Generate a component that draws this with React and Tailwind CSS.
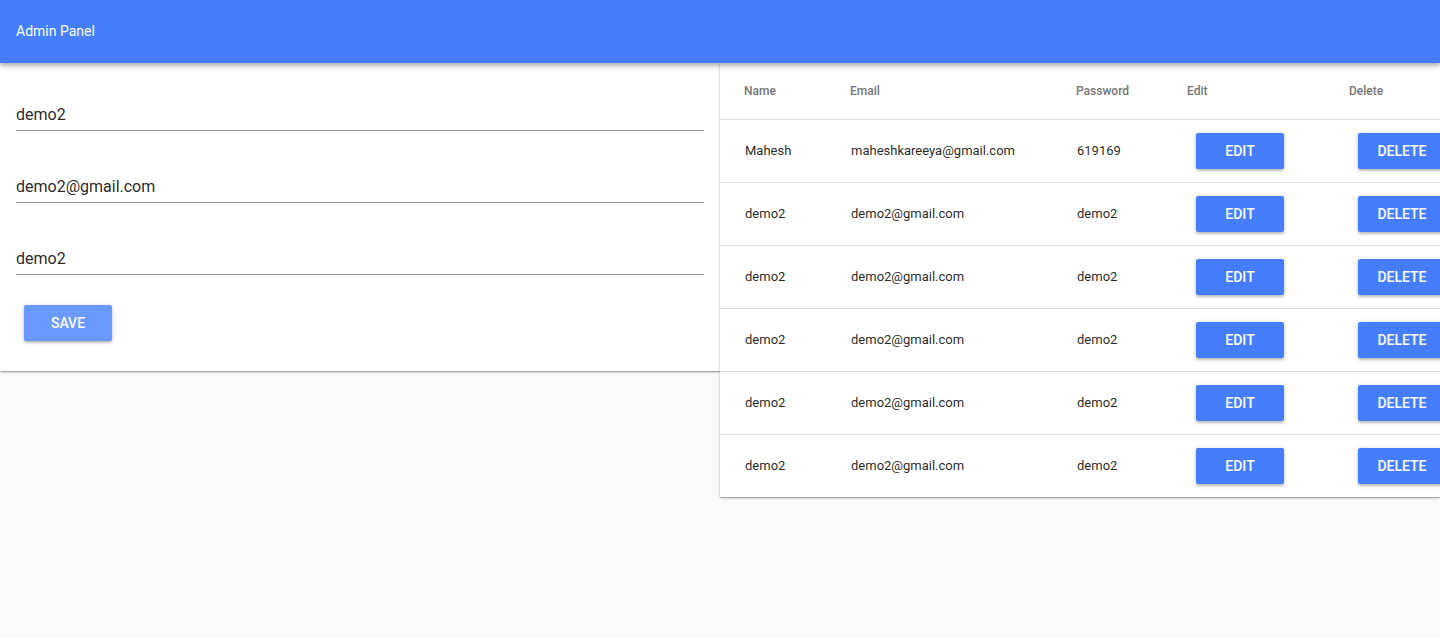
import React from 'react';

const users = [
    { name: 'Mahesh', email: 'maheshkareeya@gmail.com', password: '619169' },
    { name: 'demo2', email: 'demo2@gmail.com', password: 'demo2' },
    { name: 'demo2', email: 'demo2@gmail.com', password: 'demo2' },
    { name: 'demo2', email: 'demo2@gmail.com', password: 'demo2' },
    { name: 'demo2', email: 'demo2@gmail.com', password: 'demo2' },
    { name: 'demo2', email: 'demo2@gmail.com', password: 'demo2' },
];

const cols = "grid grid-cols-[106px_226px_111px_162px_180px]";

const Field = ({ value, first }) => (
    <div className={first ? 'pt-[25px]' : 'pt-[29px]'}>
        <div className="h-[43px] border-b border-[#949494] flex items-end pb-[6px]">
            <span className="text-[16px] text-[rgba(0,0,0,0.87)] leading-[19px]">{value}</span>
        </div>
    </div>
);

const Btn = ({ label }) => (
    <button className="h-9 min-w-[88px] px-4 ml-[9px] rounded-[2px] bg-[#447eff] text-white text-[14px] font-medium uppercase shadow-[0_1px_5px_rgba(0,0,0,0.2),0_2px_2px_rgba(0,0,0,0.14)]">
        {label}
    </button>
);

const App = () => {
    return (
        <div className="min-h-[638px] bg-[#fafafa] overflow-hidden" style={{ fontFamily: 'Roboto, "Liberation Sans", sans-serif' }}>
            {/* App bar */}
            <header className="relative z-10 h-[63px] bg-[#447eff] flex items-center px-4 shadow-[0_2px_4px_rgba(0,0,0,0.2),0_4px_5px_rgba(0,0,0,0.14)]">
                <h1 className="text-white text-[14px] font-normal">Admin Panel</h1>
            </header>

            <div className="flex items-start">
                {/* Form */}
                <div className="w-[720px] shrink-0 bg-white pl-4 pr-4 pb-[30px] shadow-[0_1px_3px_rgba(0,0,0,0.2),0_1px_1px_rgba(0,0,0,0.14),0_2px_1px_-1px_rgba(0,0,0,0.12)]">
                    <Field value="demo2" first />
                    <Field value="demo2@gmail.com" />
                    <Field value="demo2" />
                    <div className="pt-[30px] pl-[8px]">
                        <button className="h-9 w-[88px] rounded-[2px] bg-[#6a99ff] text-white text-[14px] font-medium uppercase shadow-[0_1px_5px_rgba(0,0,0,0.2),0_2px_2px_rgba(0,0,0,0.14)]">
                            Save
                        </button>
                    </div>
                </div>

                {/* Table */}
                <div className="w-[720px] shrink-0 bg-white overflow-hidden shadow-[0_1px_3px_rgba(0,0,0,0.2),0_1px_1px_rgba(0,0,0,0.14),0_2px_1px_-1px_rgba(0,0,0,0.12)]">
                    <div className="w-[785px]">
                        <div className={`${cols} h-[57px] items-center border-b border-[#e0e0e0] text-[12px] font-medium text-[#757575]`}>
                            <div className="pl-6">Name</div>
                            <div className="pl-6">Email</div>
                            <div className="pl-6">Password</div>
                            <div className="pl-6">Edit</div>
                            <div className="pl-6">Delete</div>
                        </div>
                        {users.map((u, i) => (
                            <div key={i} className={`${cols} items-center text-[13px] text-[rgba(0,0,0,0.87)] ${i < users.length - 1 ? 'h-[63px] border-b border-[#e0e0e0]' : 'h-[62px]'}`}>
                                <div className="pl-[25px]">{u.name}</div>
                                <div className="pl-[25px]">{u.email}</div>
                                <div className="pl-[25px]">{u.password}</div>
                                <div className="pl-6"><Btn label="Edit" /></div>
                                <div className="pl-6"><Btn label="Delete" /></div>
                            </div>
                        ))}
                    </div>
                </div>
            </div>
        </div>
    );
};

export default App;
